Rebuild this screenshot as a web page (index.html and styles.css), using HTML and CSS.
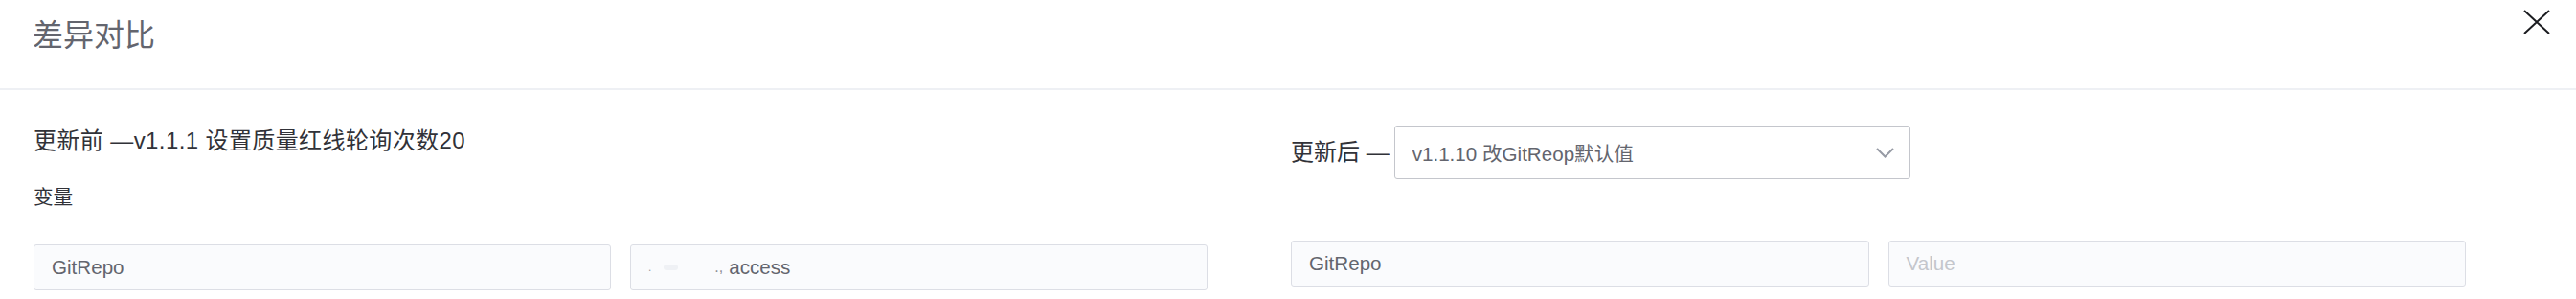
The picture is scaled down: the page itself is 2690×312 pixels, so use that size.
FILE: index.html
```html
<!DOCTYPE html>
<html lang="zh-CN">
<head>
<meta charset="utf-8">
<title>差异对比</title>
<link rel="stylesheet" href="styles.css">
</head>
<body>
<div class="dialog">
  <header class="header">
    <h1 class="title">差异对比</h1>
    <button class="close" aria-label="关闭">
      <svg width="28" height="26" viewBox="0 0 28 26"><path d="M1 1 L27 25 M27 1 L1 25" stroke="#1b1c20" stroke-width="2" fill="none"/></svg>
    </button>
  </header>
  <main class="content">
    <section class="col col-left">
      <div class="heading heading-wide">更新前 —v1.1.1 设置质量红线轮询次数20</div>
      <div class="label">变量</div>
      <div class="inputs">
        <div class="input">GitRepo</div>
        <div class="input"><span class="faint-dot">.</span><span class="blob"></span><span class="mark">.,</span><span class="after">access</span></div>
      </div>
    </section>
    <section class="col col-right">
      <div class="select-row">
        <span class="heading">更新后 —</span>
        <div class="select">
          <span class="select-text">v1.1.10 改GitReop默认值</span>
          <svg class="chevron" width="19" height="11" viewBox="0 0 19 11"><path d="M1 1 L9.5 9.5 L18 1" stroke="#979ba5" stroke-width="2" fill="none"/></svg>
        </div>
      </div>
      <div class="inputs inputs-right">
        <div class="input">GitRepo</div>
        <div class="input placeholder">Value</div>
      </div>
    </section>
  </main>
</div>
</body>
</html>
```
FILE: styles.css
```css
* { box-sizing: border-box; }
html, body { margin: 0; padding: 0; background: #ffffff; }
body {
  font-family: "Liberation Sans", "Noto Sans CJK SC", sans-serif;
  width: 2690px;
  height: 312px;
  overflow: hidden;
}
.header {
  height: 94px;
  display: flex;
  justify-content: space-between;
  align-items: flex-start;
  padding: 10px 27px 0 34px;
  border-bottom: 2px solid #eef0f4;
}
.title {
  margin: 4px 0 0;
  font-size: 32px;
  line-height: 40px;
  font-weight: 400;
  color: #63656e;
  font-family: "Noto Sans CJK SC", sans-serif;
}
.close {
  border: 0;
  padding: 0;
  background: transparent;
  width: 28px;
  height: 26px;
  display: block;
}
.close svg { display: block; }
.content {
  display: grid;
  grid-template-columns: 1313px 1fr;
  padding: 37px 0 0 35px;
  align-items: start;
}
.heading {
  font-size: 24px;
  line-height: 32px;
  color: #313238;
  font-family: "Liberation Sans", "Noto Sans CJK SC", sans-serif;
}
.heading-wide { letter-spacing: 0.4px; }
.label {
  margin-top: 27px;
  font-size: 20.6px;
  line-height: 28px;
  color: #313238;
  font-family: "Noto Sans CJK SC", sans-serif;
}
.inputs {
  display: flex;
  gap: 20px;
  width: 1226px;
  margin-top: 37px;
}
.inputs-right {
  width: 1227px;
  margin-top: 64px;
}
.input {
  flex: 1;
  height: 48px;
  border: 1.5px solid #dcdee5;
  border-radius: 3px;
  background: #fafbfd;
  padding: 0 18px;
  display: flex;
  align-items: center;
  font-size: 20.6px;
  color: #63656e;
}
.placeholder { color: #c4c6cc; }
.faint-dot { color: #9a9ca3; font-size: 12px; }
.blob {
  display: inline-block;
  width: 15px;
  height: 6px;
  background: #eff1f5;
  border-radius: 3px;
  margin-left: 13px;
}
.mark { margin-left: 38px; color: #8d8f96; font-size: 16px; margin-right: 6px; }
.select-row {
  display: flex;
  align-items: center;
}
.select {
  margin-left: 5px;
  width: 539px;
  height: 56px;
  border: 1.5px solid #c4c6cc;
  border-radius: 3px;
  background: #ffffff;
  display: flex;
  align-items: center;
  justify-content: space-between;
  padding: 0 16px 0 18px;
}
.select-text {
  font-size: 20.6px;
  color: #63656e;
}
.chevron { display: block; }
```
